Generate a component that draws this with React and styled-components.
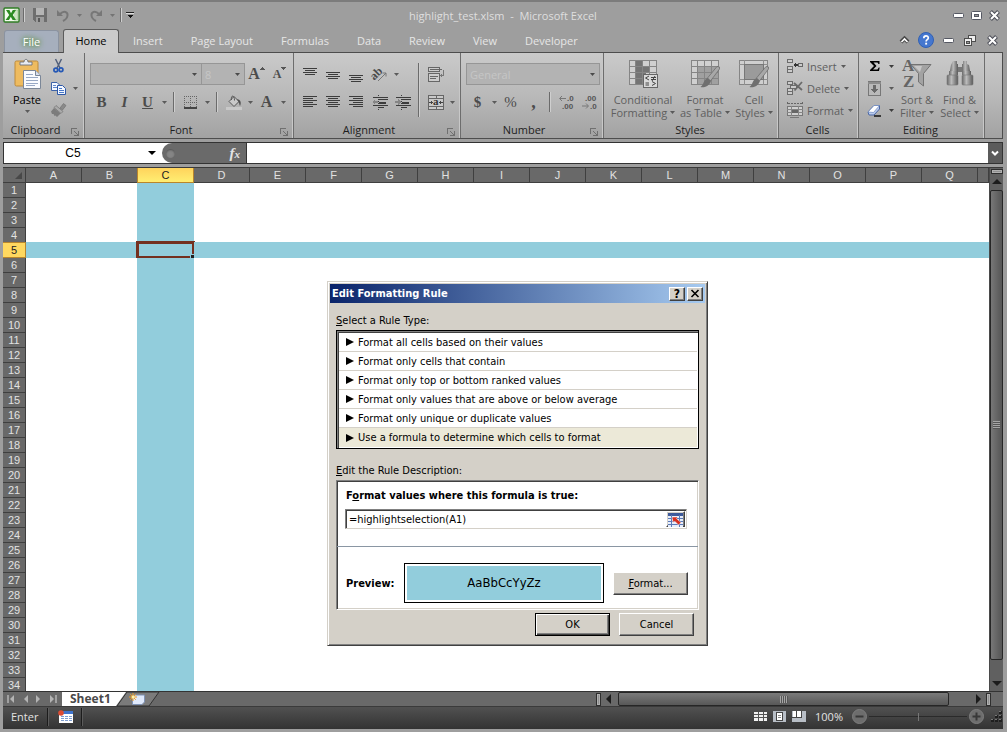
import React from "react";
import styled, { createGlobalStyle, css } from "styled-components";

const GlobalStyle = createGlobalStyle`
  * {
    box-sizing: border-box;
  }

  body {
    margin: 0;
    font-family: "Open Sans", "Noto Sans", sans-serif;
    font-size: 11px;
    color: #1e1e1e;
  }

  button, input, select {
    font: inherit;
    color: inherit;
    margin: 0;
    padding: 0;
    border: 0;
    border-radius: 0;
    background: none;
    appearance: none;
    outline: none;
  }

  svg {
    display: block;
    flex: none;
    overflow: visible;
  }
`;

/* ---------- window frame ---------- */

const Window = styled.div`
  display: flex;
  flex-direction: column;
  height: 100vh;
  padding: 0 4px 3px 3px;
  border-top: 2px solid #7c7c7c;
  background: #9e9e9e;
  overflow: hidden;
`;

const TitleBar = styled.header`
  display: grid;
  grid-template-columns: 1fr auto 1fr;
  align-items: center;
  flex: none;
  height: 28px;
  padding-bottom: 2px;
`;

const QuickAccess = styled.div`
  display: flex;
  align-items: center;
`;

const Title = styled.h1`
  margin: 0;
  font-size: 11px;
  font-weight: 400;
  color: #dedede;
  white-space: pre;
`;

const Controls = styled.div`
  display: flex;
  justify-content: flex-end;
  margin-left: auto;
`;

const ControlButton = styled.button`
  display: flex;
  align-items: center;
  justify-content: center;
  width: ${({ $width }) => $width || 18}px;
  height: 20px;
`;

const TabStrip = styled.nav`
  display: flex;
  align-items: flex-end;
  flex: none;
  height: 22px;
  padding-left: 1px;

  ${Controls} {
    padding-bottom: 2px;
  }
`;

const Tab = styled.button`
  height: 22px;
  padding: 0 14px 2px;
  color: #e6e6e6;

  ${({ $kind }) =>
    $kind === "file" &&
    css`
      width: 55px;
      margin-right: 4px;
      padding: 0 0 1px;
      border: 1px solid #8b93a0;
      border-bottom: 0;
      border-radius: 3px 3px 0 0;
      background: #a6afbd;
      color: #fff;
      text-shadow: 0 0 4px #4f8a2c, 0 0 6px #5f9a3c;
    `}

  ${({ $kind }) =>
    $kind === "active" &&
    css`
      width: 56px;
      height: 24px;
      margin-bottom: -1px;
      padding: 0 0 2px;
      border: 1px solid #5b5b5b;
      border-bottom: 0;
      border-radius: 3px 3px 0 0;
      background: #cbcbcb;
      color: #000;
      z-index: 1;
    `}
`;

/* ---------- ribbon ---------- */

const Ribbon = styled.section`
  display: flex;
  flex: none;
  height: 87px;
  border: 1px solid #4d4d4d;
  border-left: 0;
  background: linear-gradient(#cacaca, #b9b9b9 50%, #a2a2a2);
`;

const Group = styled.div`
  display: flex;
  flex-direction: column;
  width: ${({ $width }) => $width}px;
  border-right: 1px solid #6d6d6d;
  box-shadow: inset -1px 0 #c8c8c8;
`;

const GroupBody = styled.div`
  display: flex;
  flex: 1;
  padding: ${({ $pad }) => $pad || "2px 4px 0"};
`;

const GroupFooter = styled.div`
  display: flex;
  align-items: center;
  height: 17px;
  padding-right: 2px;
`;

const GroupName = styled.span`
  flex: 1;
  text-align: center;
`;

const Launcher = styled.button`
  display: flex;
  align-items: flex-end;
  justify-content: center;
  width: 14px;
  height: 12px;
`;

const Stack = styled.div`
  display: flex;
  flex-direction: column;
  gap: ${({ $gap }) => $gap || 0}px;
`;

const Line = styled.div`
  display: flex;
  align-items: center;
  height: 22px;
`;

const ToolButton = styled.button`
  display: flex;
  align-items: center;
  justify-content: center;
  width: ${({ $width }) => $width || 23}px;
  height: 22px;
  color: #4c4c4c;
`;

const ArrowButton = styled.button`
  display: flex;
  align-items: center;
  justify-content: center;
  width: 10px;
  height: 22px;
`;

const Divider = styled.span`
  align-self: ${({ $tall }) => ($tall ? "stretch" : "center")};
  width: 2px;
  height: ${({ $tall }) => ($tall ? "auto" : "20px")};
  margin: 0 4px;
  border-left: 1px solid #6b6b6b;
  border-right: 1px solid #cfcfcf;
`;

const QuickDivider = styled(Divider)`
  height: 14px;
  margin: 0 3px;
`;

const Glyph = styled.span`
  font-family: "Liberation Serif", serif;
  font-size: ${({ $size }) => $size || 15}px;
  font-weight: ${({ $plain }) => ($plain ? 400 : 700)};
  font-style: ${({ $italic }) => ($italic ? "italic" : "normal")};
  text-decoration: ${({ $underline }) => ($underline ? "underline" : "none")};
  line-height: 18px;
`;

const ComboBox = styled.label`
  display: grid;
  align-items: center;
  width: ${({ $width }) => $width}px;
  height: 22px;
  border: 1px solid #969696;
  background: #b3b3b3;

  & + & {
    border-left: 0;
  }

  select,
  svg {
    grid-area: 1 / 1;
  }

  select {
    width: 100%;
    height: 20px;
    padding-left: 3px;
    color: #c6c6c6;
  }

  svg {
    justify-self: end;
    margin-right: 4px;
    pointer-events: none;
  }
`;

const BigButton = styled.button`
  display: flex;
  flex-direction: column;
  align-items: center;
  justify-content: flex-start;
  width: ${({ $width }) => $width}px;
  padding-top: 4px;
  line-height: 13px;
  color: ${({ $dim }) => ($dim ? "#5f5f5f" : "#000")};
  white-space: nowrap;

  > svg:first-child {
    margin-bottom: 4px;
  }
`;

const Caption = styled.span`
  display: flex;
  align-items: center;
  gap: 3px;

  & + svg {
    margin-top: 4px;
  }
`;

const RowButton = styled.button`
  display: flex;
  align-items: center;
  gap: 4px;
  height: 22px;
  color: #5f5f5f;
`;

/* ---------- formula bar ---------- */

const FormulaBar = styled.div`
  display: flex;
  flex: none;
  height: 22px;
  margin-top: 3px;
  border: 1px solid #333;
  background: #fff;
`;

const NameBox = styled.div`
  display: flex;
  align-items: center;
  width: 158px;

  input {
    width: 138px;
    text-align: center;
    font-family: "Liberation Sans", sans-serif;
    font-size: 12px;
    color: #000;
  }

  button {
    display: flex;
    justify-content: center;
    width: 20px;
  }
`;

const FunctionPad = styled.div`
  display: flex;
  align-items: center;
  justify-content: space-between;
  width: 85px;
  padding: 0 6px 0 4px;
  border-right: 1px solid #333;
  border-radius: 10px 0 0 10px;
  background: #6a6a6a;
`;

const Knob = styled.span`
  width: 9px;
  height: 9px;
  border-radius: 50%;
  background: #858585;
  box-shadow: inset 0 1px 2px #505050;
`;

const FxButton = styled.button`
  font-family: "Liberation Serif", serif;
  font-size: 15px;
  font-style: italic;
  font-weight: 700;
  line-height: 18px;
  color: #e4e4e4;

  small {
    font-size: 11px;
  }
`;

const FormulaInput = styled.input`
  flex: 1;
  min-width: 0;
`;

const ExpandButton = styled.button`
  display: flex;
  align-items: center;
  justify-content: center;
  width: 14px;
  background: #5b5b5b;
`;

/* ---------- worksheet ---------- */

const Worksheet = styled.main`
  display: flex;
  flex: 1;
  min-height: 0;
  margin-top: 3px;
  border-top: 1px solid #3a3a3a;
`;

const GridArea = styled.div`
  flex: 1;
  min-width: 0;
  overflow: hidden;
  background: #fff;
`;

const Grid = styled.table`
  width: 100%;
  table-layout: fixed;
  border-collapse: separate;
  border-spacing: 0;
  font-family: "Liberation Sans", sans-serif;
  font-size: 11px;

  tr {
    height: 15px;
  }

  th,
  td {
    padding: 0;
    line-height: 14px;
  }
`;

const Corner = styled.th`
  width: 23px;
  border-right: 1px solid #3f3f3f;
  border-bottom: 1px solid #3f3f3f;
  background: #696969;

  svg {
    margin: 0 3px 0 auto;
  }
`;

const ColumnHead = styled.th`
  width: ${({ $rest }) => ($rest ? "auto" : "56px")};
  border-right: 1px solid ${({ $on }) => ($on ? "#b9862c" : "#3f3f3f")};
  border-bottom: 1px solid ${({ $on }) => ($on ? "#b9862c" : "#3f3f3f")};
  background: ${({ $on }) => ($on ? "linear-gradient(#ffd35c, #ffee72)" : "#696969")};
  box-shadow: ${({ $on }) => ($on ? "-1px 0 #b9862c" : "none")};
  font-weight: 400;
  color: ${({ $on }) => ($on ? "#222" : "#e2e2e2")};
`;

const RowHead = styled.th`
  border-right: 1px solid ${({ $on }) => ($on ? "#b9862c" : "#3f3f3f")};
  border-bottom: 1px solid ${({ $on }) => ($on ? "#b9862c" : "#3f3f3f")};
  background: ${({ $on }) => ($on ? "#ffd85f" : "#696969")};
  box-shadow: ${({ $on }) => ($on ? "0 -1px #b9862c" : "none")};
  font-weight: 400;
  color: ${({ $on }) => ($on ? "#222" : "#e2e2e2")};
`;

/* the tint also covers the grid line before the cell */
const Cell = styled.td`
  position: relative;
  background: ${({ $inColumn, $inRow }) => ($inColumn || $inRow ? "#92cddc" : "#fff")};
  box-shadow: ${({ $inColumn, $inRow }) =>
    $inRow ? "0 -1px #92cddc" : $inColumn ? "-1px 0 #92cddc" : "none"};
`;

const Selection = styled.div`
  position: absolute;
  inset: -2px -1px -1px -2px;
  border: 3px solid #74301f;

  &::after {
    content: "";
    position: absolute;
    right: -5px;
    bottom: -5px;
    width: 6px;
    height: 6px;
    border-top: 1px solid #92cddc;
    border-left: 1px solid #92cddc;
    background: #222;
  }
`;

const VerticalScroll = styled.div`
  display: flex;
  flex-direction: column;
  align-items: center;
  width: 14px;
  border-left: 1px solid #4a4a4a;
  background: #606060;
`;

const SplitBox = styled.span`
  ${({ $upright }) =>
    $upright
      ? css`
          width: 5px;
          height: 13px;
        `
      : css`
          width: 12px;
          height: 5px;
          margin-top: 1px;
        `}
  border: 1px solid #2f2f2f;
  background: #8f8f8f;
  box-shadow: inset 0 0 0 1px #b0b0b0;
`;

const ScrollArrow = styled.button`
  display: flex;
  align-items: center;
  justify-content: center;
  flex: none;
  width: 15px;
  height: 15px;
`;

const VerticalThumb = styled.div`
  display: flex;
  align-items: center;
  justify-content: center;
  flex: 1;
  width: 13px;
  margin: 1px 0 16px;
  border: 1px solid #262626;
  border-radius: 2px;
  background: linear-gradient(to right, #777, #555);
`;

/* ---------- sheet tabs and status bar ---------- */

const SheetBar = styled.div`
  display: flex;
  align-items: center;
  flex: none;
  height: 16px;
  border-top: 1px solid #333;
  border-bottom: 1px solid #3a3a3a;
  background: #696969;
`;

const SheetNav = styled.div`
  display: flex;
  align-items: center;
  width: 59px;
  padding-left: 1px;
`;

const NavButton = styled.button`
  display: flex;
  align-items: center;
  justify-content: center;
  width: 14px;
  height: 14px;
`;

const SheetTab = styled.button`
  width: 64px;
  height: 14px;
  padding-left: 8px;
  background: #fff;
  clip-path: polygon(0 0, 100% 0, calc(100% - 10px) 100%, 0 100%);
  font-size: 12px;
  font-weight: 700;
  line-height: 14px;
  color: #4a4a4a;
  text-align: left;
`;

const NewSheetTab = styled.button`
  width: 44px;
  height: 14px;
  margin-left: -10px;
`;

const HorizontalScroll = styled.div`
  display: flex;
  align-items: center;
  flex: 0 1 395px;
  height: 14px;
  margin-left: auto;
  margin-right: 12px;
`;

const HorizontalThumb = styled.div`
  display: flex;
  align-items: center;
  justify-content: center;
  flex: 1;
  height: 14px;
  margin: 0 22px 0 2px;
  border: 1px solid #262626;
  border-radius: 2px;
  background: linear-gradient(#7a7a7a, #585858);
`;

const Grip = styled.span`
  width: ${({ $upright }) => ($upright ? 8 : 7)}px;
  height: ${({ $upright }) => ($upright ? 7 : 8)}px;
  background: repeating-linear-gradient(
    ${({ $upright }) => ($upright ? "to right" : "to bottom")},
    #a5a5a5 0 1px,
    #555 1px 2px
  );
`;

const StatusBar = styled.footer`
  display: flex;
  align-items: center;
  flex: none;
  height: 22px;
  padding: 0 0 3px 8px;
  background: linear-gradient(#515151, #333);
  color: #e2e2e2;
`;

const StatusText = styled.span`
  width: 36px;
`;

const StatusDivider = styled.span`
  width: 2px;
  height: 18px;
  border-left: 1px solid #1c1c1c;
  border-right: 1px solid #5b5b5b;
`;

const StatusButton = styled.button`
  display: flex;
  align-items: center;
  justify-content: center;
  width: ${({ $width }) => $width || 19}px;
  height: 19px;
`;

const ViewTools = styled.div`
  display: flex;
  align-items: center;
  gap: ${({ $gap }) => $gap || 0}px;
  margin-left: auto;
`;

const ZoomText = styled.button`
  width: 42px;
`;

const ZoomRange = styled.input`
  width: 98px;
  height: 8px;
  background:
    linear-gradient(#222, #222) center / 1px 8px no-repeat,
    linear-gradient(#2a2a2a, #2a2a2a) center / 100% 1px no-repeat;

  &::-webkit-slider-thumb {
    appearance: none;
    width: 1px;
    height: 8px;
    background: #777;
  }
`;

/* ---------- dialog ---------- */

const Dialog = styled.section`
  position: absolute;
  top: 281px;
  left: 327px;
  width: 381px;
  padding: 1px;
  border: 1px solid;
  border-color: #d4d0c8 #404040 #404040 #d4d0c8;
  background: #d4d0c8;
  box-shadow: inset 1px 1px #fff, inset -1px -1px #808080;
  font-family: "DejaVu Sans Condensed", "DejaVu Sans", sans-serif;
  font-size: 11px;
  color: #000;
`;

const DialogTitle = styled.header`
  display: flex;
  align-items: center;
  gap: 2px;
  height: 19px;
  margin: 1px 1px 0;
  padding: 0 2px;
  background: linear-gradient(to right, #0a246a, #a6caf0);
  color: #fff;

  h2 {
    flex: 1;
    margin: 0;
    font-size: 11px;
  }
`;

const raised = css`
  border: 1px solid;
  border-color: #fff #404040 #404040 #fff;
  background: #d4d0c8;
  box-shadow: inset -1px -1px #808080;
`;

const CaptionButton = styled.button`
  ${raised}
  width: 16px;
  height: 14px;
  display: flex;
  align-items: center;
  justify-content: center;
  font-size: 12px;
  font-weight: 700;
  line-height: 12px;
  color: #000;
`;

const DialogBody = styled.div`
  padding: 11px 7px 8px;
`;

const FieldName = styled.p`
  margin: 0;
  height: 16px;
  line-height: 14px;
`;

const Key = styled.span`
  text-decoration: underline;
`;

const RuleList = styled.ul`
  margin: 0 0 15px;
  padding: 2px 1px 1px 2px;
  border: 1px solid #000;
  background: #fff;
  box-shadow: inset 1px 1px #808080, inset 2px 2px #404040;
  list-style: none;

  li:not(:last-child) button {
    border-bottom: 1px solid #d4d0c8;
  }
`;

const RuleButton = styled.button`
  display: flex;
  align-items: center;
  gap: 4px;
  width: 100%;
  height: 19px;
  padding-left: 6px;
  background: ${({ $chosen }) => ($chosen ? "#ece9d8" : "#fff")};
`;

const RulePanel = styled.div`
  border: 1px solid;
  border-color: #808080 #fff #fff #808080;
  background: #fff;
  box-shadow: inset 1px 1px #404040, inset -1px -1px #d4d0c8;
`;

const FormulaPart = styled.div`
  padding: 8px 11px 17px 8px;
  border-bottom: 1px solid #8a96a3;
`;

const FormulaLabel = styled.label`
  display: block;
  height: 20px;
  padding-left: 1px;
  font-weight: 700;
  line-height: 14px;
`;

const RefEdit = styled.div`
  display: flex;
  height: 20px;
  padding: 1px 1px 1px 3px;
  border: 1px solid;
  border-color: #808080 #d4d0c8 #d4d0c8 #808080;
  box-shadow: inset 1px 1px #404040;

  input {
    flex: 1;
    min-width: 0;
  }

  button {
    ${raised}
    width: 19px;
    padding: 1px;
  }
`;

const PreviewPart = styled.div`
  display: flex;
  align-items: center;
  padding: 16px 10px 6px 9px;
  font-weight: 700;
`;

const PreviewLabel = styled.span`
  width: 58px;
`;

const PreviewBox = styled.div`
  display: flex;
  align-items: center;
  justify-content: center;
  flex: 1;
  height: 40px;
  margin-right: 9px;
  padding: 2px;
  border: 1px solid #000;

  span {
    flex: 1;
    align-self: stretch;
    background: #92cddc;
    font-size: 13px;
    font-weight: 400;
    line-height: 34px;
    text-align: center;
  }
`;

const PushButton = styled.button`
  ${raised}
  width: 75px;
  height: 23px;
  font-weight: 400;

  ${({ $primary }) =>
    $primary &&
    css`
      border-color: #000;
      box-shadow: inset 1px 1px #fff, inset -1px -1px #404040, inset -2px -2px #808080;
    `}
`;

const DialogActions = styled.div`
  display: flex;
  justify-content: flex-end;
  gap: 9px;
  padding: 3px 5px 0;
`;

/* ---------- icons ---------- */

const Icon = ({ w, h, children, sharp = true }) => (
  <svg
    width={w}
    height={h}
    viewBox={`0 0 ${w} ${h}`}
    fill="none"
    shapeRendering={sharp ? "crispEdges" : "auto"}
    aria-hidden="true"
  >
    {children}
  </svg>
);

const Down = ({ color = "#5a5a5a", w = 5 }) => (
  <Icon w={w} h={w > 5 ? 4 : 3} sharp={false}>
    <path d={`M0 0H${w}L${w / 2} ${w > 5 ? 4 : 3}Z`} fill={color} />
  </Icon>
);

const ExcelIcon = () => (
  <Icon w={17} h={16} sharp={false}>
    <rect x="1" y="1" width="15" height="14" rx="1" fill="#f4fbef" stroke="#2f7d25" strokeWidth="1.4" />
    <path d="M11 3H15V13H11" fill="#cfe6c4" stroke="#8cc07c" strokeWidth=".6" />
    <path d="M3 3H6.4L8 6.2 9.8 3H13L9.8 8 13 13H9.6L7.8 9.8 6 13H2.6L6.2 8Z" fill="#2c8c22" />
  </Icon>
);

const SaveIcon = () => (
  <Icon w={14} h={14}>
    <path d="M0 0H14V14H2L0 12Z" fill="#6e6e6e" />
    <rect x="3" y="0" width="8" height="7" fill="#b5b5b5" />
    <rect x="3" y="9" width="8" height="5" fill="#9d9d9d" />
    <rect x="5" y="10" width="2" height="4" fill="#5a5a5a" />
  </Icon>
);

const UndoIcon = ({ flip }) => (
  <Icon w={12} h={13} sharp={false}>
    <g transform={flip ? "matrix(-1 0 0 1 12 0)" : undefined}>
      <path d="M3 5C7 1 11 3 10.5 6.5 10.2 9 8 11 6 12" stroke="#777" strokeWidth="2" />
      <path d="M0 1V7H6Z" fill="#777" />
    </g>
  </Icon>
);

const CustomizeIcon = () => (
  <Icon w={8} h={7}>
    <path d="M0 .5H8" stroke="#222" />
    <path d="M0 1.5H8" stroke="#ddd" />
    <path d="M1 3H7L4 6Z" fill="#111" />
  </Icon>
);

const MinimizeIcon = () => (
  <Icon w={11} h={5} sharp={false}>
    <rect x=".5" y=".5" width="10" height="4" rx="1" fill="#fff" stroke="#555863" />
  </Icon>
);

const MaximizeIcon = () => (
  <Icon w={11} h={9} sharp={false}>
    <rect x=".5" y=".5" width="10" height="8" rx="1" fill="#fff" stroke="#555863" />
    <rect x="3.5" y="3.5" width="4" height="2" fill="#999" stroke="#555863" />
  </Icon>
);

const RestoreIcon = () => (
  <Icon w={12} h={11} sharp={false}>
    <rect x="4.5" y=".5" width="7" height="6" fill="#eee" stroke="#4d4d4d" />
    <rect x=".5" y="3.5" width="7" height="7" fill="#eee" stroke="#4d4d4d" />
    <rect x="2.5" y="6.5" width="3" height="2" fill="#999" stroke="#4d4d4d" />
  </Icon>
);

const CloseIcon = () => (
  <Icon w={11} h={9} sharp={false}>
    <path d="M1.5 .5L9.5 8.5M9.5 .5L1.5 8.5" stroke="#4d4f59" strokeWidth="4" />
    <path d="M2 1L9 8M9 1L2 8" stroke="#fff" strokeWidth="2" />
  </Icon>
);

const CollapseIcon = () => (
  <Icon w={9} h={8} sharp={false}>
    <path d="M1 6L4.5 2.5 8 6" stroke="#484848" strokeWidth="4" />
    <path d="M1.5 6L4.5 3 7.5 6" stroke="#fff" strokeWidth="1.6" />
  </Icon>
);

const HelpIcon = () => (
  <Icon w={16} h={16} sharp={false}>
    <circle cx="8" cy="8" r="7.5" fill="#4577cf" stroke="#3161b4" />
    <path d="M5.8 6.3C5.8 3 10.4 3.3 10.3 6 10.2 7.7 8.1 7.7 8.1 9.5" stroke="#fff" strokeWidth="1.7" />
    <rect x="7.2" y="10.7" width="1.9" height="1.9" fill="#fff" />
  </Icon>
);

const LauncherIcon = () => (
  <Icon w={8} h={8}>
    <path d="M.5 6V.5H6" stroke="#707070" />
    <path d="M3 3L7 7M7.5 3V7.5H3" stroke="#707070" />
  </Icon>
);

const PasteIcon = () => (
  <Icon w={27} h={30} sharp={false}>
    <rect x="1" y="2" width="23" height="25" rx="1.5" fill="#eebb5f" stroke="#bd8a3a" />
    <path d="M6 6V3H10C10 -.5 14 -.5 14 3H18V6Z" fill="#e8ebf0" stroke="#6c7078" strokeWidth=".9" />
    <path d="M9.5 11.5H21.5L26.5 16.5V29.5H9.5Z" fill="#fafcff" stroke="#7b8798" />
    <path d="M21.5 11.5V16.5H26.5" fill="#d7e0ee" stroke="#7b8798" />
    <path d="M12 15.5H19M12 18.5H24M12 21.5H24M12 24.5H24M12 26.5H21" stroke="#98a9c5" />
  </Icon>
);

const CutIcon = () => (
  <Icon w={11} h={14} sharp={false}>
    <path d="M2.5 0L7 9M8.5 0L4 9" stroke="#53617c" strokeWidth="1.5" />
    <circle cx="2.8" cy="11" r="1.9" stroke="#2558b5" strokeWidth="1.7" />
    <circle cx="8" cy="10.7" r="1.9" stroke="#2558b5" strokeWidth="1.7" />
  </Icon>
);

const CopyIcon = () => (
  <Icon w={15} h={13} sharp={false}>
    <path d="M.5 .5H6L8.5 3V8.5H.5Z" fill="#f3f7ff" stroke="#3c62a8" />
    <path d="M2 3.5H5M2 5.5H6" stroke="#5e86cc" />
    <path d="M6.5 3.5H11.5L14.5 6.5V12.5H6.5Z" fill="#f3f7ff" stroke="#2d58a8" />
    <path d="M8 6.5H11M8 8.5H13M8 10.5H13" stroke="#4878c9" />
  </Icon>
);

const BrushIcon = () => (
  <Icon w={15} h={14} sharp={false}>
    <path d="M9 5L12.5 .5 15 2.5 11.5 7Z" fill="#8a8a8a" stroke="#6a6a6a" strokeWidth=".6" />
    <path d="M5 2.5L12 8.5 10 10.5 3 4.5Z" fill="#ababab" stroke="#666" strokeWidth=".6" />
    <path d="M3 5L9.5 10.5 6 14 4.5 12.5 3.5 13 2.5 11 1 11 0 8.5Z" fill="#7c7c7c" />
  </Icon>
);

const BordersIcon = () => (
  <Icon w={13} h={13}>
    <path d="M0 .5H13M0 6.5H13M.5 0V12M6.5 0V12M12.5 0V12" stroke="#666" strokeDasharray="1 1" />
    <path d="M0 12H13" stroke="#444" strokeWidth="2" />
  </Icon>
);

const BucketIcon = () => (
  <Icon w={16} h={15} sharp={false}>
    <rect y="12" width="16" height="3" fill="#c9c9c9" />
    <path d="M3 6.5L8 1.5 13 6.5 8 11.5Z" fill="#c9c9c9" stroke="#555" />
    <path d="M5.5 5C4.5 0 8.5 -.5 8.5 5.5" stroke="#555" />
    <path d="M11 4C15 5 15.500 8 14 11 13 9 13.500 8 12.500 7Z" fill="#4f4f4f" />
  </Icon>
);

/* lines is a list of [x1, x2] pairs, one every other pixel row */
const LinesIcon = ({ lines, top = 0 }) => (
  <Icon w={15} h={15}>
    {lines.map(([from, to], i) => (
      <path key={i} d={`M${from} ${top + i * 2 + 0.5}H${to}`} stroke="#3c3c3c" />
    ))}
  </Icon>
);

const IndentIcon = ({ right }) => (
  <Icon w={16} h={15}>
    <path d="M1 2.5H16M7 4.5H16M1 10.5H16M7 12.5H12" stroke="#3c3c3c" />
    <path d="M7 7.5H14" stroke="#3c3c3c" strokeWidth="2" />
    <path d="M6.500 0V15" stroke="#3c3c3c" strokeDasharray="1 1" />
    <path d={right ? "M0 6H3V4L6 7 3 10V8H0Z" : "M6 6H3V4L0 7 3 10V8H6Z"} fill="#858585" />
  </Icon>
);

const OrientationIcon = () => (
  <Icon w={15} h={15} sharp={false}>
    <text x="-1" y="10" transform="rotate(-45 5 8)" fontFamily="Liberation Serif" fontWeight="700" fontSize="12" fill="#4a4a4a">
      ab
    </text>
    <path d="M6 14L14 6M14 6H10.5M14 6V9.5" stroke="#777" />
  </Icon>
);

const WrapIcon = () => (
  <Icon w={16} h={15}>
    <rect x=".5" y=".5" width="11" height="4" fill="#ccc" stroke="#666" />
    <rect x=".5" y="6.5" width="11" height="8" fill="#ccc" stroke="#666" />
    <path d="M2 2.5H14M2 9.5H10M2 11.5H8" stroke="#666" />
    <path d="M15.5 3V8H12M13.5 6.5V10" stroke="#777" />
  </Icon>
);

const MergeIcon = () => (
  <Icon w={16} h={15}>
    <rect x=".5" y=".5" width="15" height="14" fill="#c9c9c9" stroke="#666" />
    <path d="M0 3.5H16M0 11.5H16M8.5 0V3M8.5 12V15" stroke="#666" />
    <path d="M1 7.5H5M11 7.5H15M3.5 6V9M12.5 6V9" stroke="#444" />
    <text x="5" y="10" fontFamily="Liberation Serif" fontWeight="700" fontSize="11" fill="#333">
      a
    </text>
  </Icon>
);

const DecimalIcon = ({ less }) => (
  <Icon w={16} h={15} sharp={false}>
    <g fontFamily="Liberation Sans" fontWeight="700" fontSize="8" fill="#555">
      <text x={less ? 3 : 8} y="6">
        {less ? ".00" : ".0"}
      </text>
      <text x={less ? 8 : 3} y="14">
        {less ? ".0" : ".00"}
      </text>
    </g>
    <path d={less ? "M0 11H6M4 8.5L6.5 11 4 13.5" : "M7 3.5H1M3 1L.5 3.5 3 6"} stroke="#777" />
  </Icon>
);

const SheetGrid = ({ children, dark }) => (
  <Icon w={30} h={30} sharp={false}>
    <rect x="1" y="1" width="27" height="24" fill="#d0d0d0" />
    {dark}
    <path
      d="M1.5 1V25.5M7.5 1V25M14.5 1V25M21.5 1V25M28.5 1V25M1 1.5H29M1 7.5H29M1 13.5H29M1 19.5H29M1 25.5H29"
      stroke="#858585"
      shapeRendering="crispEdges"
    />
    {children}
  </Icon>
);

const PaintBrush = () => (
  <g>
    <path d="M29.5 8L27 7.5 17.5 19 20.5 22 29.5 10Z" fill="#a8a8a8" stroke="#666" strokeWidth=".7" />
    <path d="M17.5 19L21 22C19 28 13 29 10.5 28 14 26 13 21 17.5 19Z" fill="#6f6f6f" />
  </g>
);

const ConditionalIcon = () => (
  <SheetGrid dark={<path d="M8 1H15V7H21V13H18V19H15V25H8Z" fill="#747474" />}>
    <rect x="15.5" y="15.5" width="14" height="13" fill="#d9d9d9" stroke="#666" />
    <path
      d="M21 17L17.5 19 21 21M23 18.5H28M23 20.5H28M27 17L24 22M17.5 24H21M17.5 26H21M24 22.5L27.5 24.5 24 26.5"
      stroke="#444"
    />
  </SheetGrid>
);

const FormatTableIcon = () => (
  <SheetGrid dark={<path d="M8 8H28V25H8Z" fill="#a0a0a0" />}>
    <PaintBrush />
  </SheetGrid>
);

const CellStylesIcon = () => (
  <Icon w={30} h={30} sharp={false}>
    <rect x=".5" y="1.5" width="28" height="24" fill="#cfcfcf" stroke="#858585" />
    <path d="M0 5.5H29M0 20.5H29M5.5 1V26M24.5 1V26" stroke="#909090" />
    <rect x="5.5" y="5.5" width="19" height="15" fill="#9b9b9b" stroke="#777" />
    <PaintBrush />
  </Icon>
);

const InsertIcon = () => (
  <Icon w={16} h={15}>
    <path d="M.5 .5H5.5V3.5H.5ZM.5 7.5H5.5V13.5H.5ZM.5 10.5H5.5" fill="#ccc" stroke="#6c6c6c" />
    <rect x="11.5" y="4.5" width="4" height="3" fill="#ccc" stroke="#666" />
    <path d="M6 6L9 3V5H11V7H9V9Z" fill="#333" />
  </Icon>
);

const DeleteIcon = () => (
  <Icon w={16} h={15} sharp={false}>
    <path
      d="M.5 .5H5.5V3.5H.5ZM.5 7.5H5.5V13.5H.5ZM.5 10.5H5.5M3.5 4.5H9.5V7.5H3.5Z"
      fill="#ccc"
      stroke="#6c6c6c"
      shapeRendering="crispEdges"
    />
    <path d="M7 2L15 9M15 1L7.5 9.5" stroke="#6a6a6a" strokeWidth="1.8" />
  </Icon>
);

const FormatIcon = () => (
  <Icon w={16} h={16}>
    <path d="M.5 0V3M15.5 0V3M1 1.5H15" stroke="#666" strokeDasharray="2 1" />
    <rect x=".5" y="4.5" width="15" height="9" fill="#cfcfcf" stroke="#777" />
    <path d="M0 7.5H16M0 10.5H16M4.5 4V14M11.5 4V14" stroke="#858585" />
    <rect x="5" y="8" width="6" height="3" fill="#666" />
    <path d="M3 15.5H12" stroke="#777" />
  </Icon>
);

const SigmaIcon = () => (
  <Icon w={10} h={10} sharp={false}>
    <path d="M0 0H9.5V3H8.5L7.5 1.5H3.5L6.5 5 3 8.5H7.5L8.7 6.5H9.7L9 10H0V9L4 5 0 1Z" fill="#000" />
  </Icon>
);

const FillIcon = () => (
  <Icon w={13} h={15}>
    <rect x=".5" y=".5" width="12" height="14" fill="#b9b9b9" stroke="#777" />
    <path d="M0 2H13" stroke="#8c8c8c" strokeWidth="2" />
    <path d="M5 4H8V8H10L6.5 12 3 8H5Z" fill="#696969" />
  </Icon>
);

const EraserIcon = () => (
  <Icon w={15} h={13} sharp={false}>
    <path d="M1 8L7 1.5H12.5V5L7 11H2Z" fill="#b9cbee" stroke="#4a66a4" />
    <path d="M1 8L7 1.5H12.5L6.5 8.5Z" fill="#fff" stroke="#6b86bd" strokeWidth=".7" />
    <path d="M7 12H14" stroke="#111" strokeWidth="1.5" />
  </Icon>
);

const SortIcon = () => (
  <Icon w={30} h={30} sharp={false}>
    <path d="M9 5.5H29L21.5 14.5V27L16.5 23V14.5Z" fill="#a3a3a3" stroke="#737373" />
    <path d="M12 7H20L18 13Z" fill="#c8c8c8" />
    <g fontFamily="Liberation Serif" fontWeight="700" fontSize="17" fill="#656565">
      <text x="0" y="12">
        A
      </text>
      <text x="1" y="28">
        Z
      </text>
    </g>
  </Icon>
);

const FindIcon = () => (
  <Icon w={28} h={30} sharp={false}>
    <defs>
      <linearGradient id="barrel">
        <stop offset="0" stopColor="#686868" />
        <stop offset=".4" stopColor="#bcbcbc" />
        <stop offset="1" stopColor="#5a5a5a" />
      </linearGradient>
    </defs>
    <path d="M7 2H11V5H12V12H4L5 6Z" fill="url(#barrel)" />
    <path d="M17 2H21V5L23 6 24 12H16V5H17Z" fill="url(#barrel)" />
    <rect x="12" y="8" width="4" height="5" fill="#777" />
    <rect x="3" y="12" width="9" height="4" fill="url(#barrel)" />
    <rect x="16" y="12" width="9" height="4" fill="url(#barrel)" />
    <rect x="1" y="16" width="11" height="10" rx="1" fill="url(#barrel)" stroke="#777" strokeWidth=".6" />
    <rect x="16" y="16" width="11" height="10" rx="1" fill="url(#barrel)" stroke="#777" strokeWidth=".6" />
  </Icon>
);

const NavIcon = ({ left, stop }) => (
  <Icon w={8} h={8} sharp={false}>
    <path d={left ? "M7 0V8L3 4Z" : "M1 0V8L5 4Z"} fill="#b4b4b4" />
    {stop && <path d={left ? "M1 0V8" : "M7 0V8"} stroke="#b4b4b4" strokeWidth="1.5" />}
  </Icon>
);

const scrollPaths = {
  up: "M0 7L5 2 10 7Z",
  down: "M0 2L5 7 10 2Z",
  left: "M7 0V10L2 5Z",
  right: "M2 0V10L7 5Z",
};

const ScrollIcon = ({ way }) => (
  <Icon w={10} h={10} sharp={false}>
    <path d={scrollPaths[way]} fill="#1c1c1c" />
  </Icon>
);

const NewSheetIcon = () => (
  <Icon w={44} h={14} sharp={false}>
    <path d="M11 0H43L33 14H1Z" fill="#7b7b7b" stroke="#333" />
    <path d="M16.5 3H28.5V10L26 12.5H16.5Z" fill="#dfe9fb" stroke="#8093b5" />
    <path d="M17 1V9M13 5H21M14.2 2.2L19.8 7.8M19.8 2.2L14.2 7.8" stroke="#f29c1f" />
    <circle cx="17" cy="5" r="1.5" fill="#fff2a8" />
  </Icon>
);

const MacroIcon = () => (
  <Icon w={15} h={13} sharp={false}>
    <rect x="1" y="1" width="14" height="12" fill="#fff" />
    <rect x="1" y="1" width="14" height="3" fill="#3f74ce" />
    <path d="M3 6.5H14M3 8.5H14M3 10.5H14" stroke="#7f9ed0" />
    <path d="M6.5 5V12M10.5 5V12" stroke="#fff" />
    <circle cx="3" cy="3" r="2.8" fill="#dd4b32" />
  </Icon>
);

const NormalViewIcon = () => (
  <Icon w={13} h={9}>
    <rect width="13" height="9" fill="#f2f2f2" />
    <path d="M0 2.5H13M0 5.5H13M4 0V9M9 0V9" stroke="#555" />
  </Icon>
);

const LayoutViewIcon = () => (
  <Icon w={13} h={11}>
    <rect width="13" height="11" fill="#b8bec6" />
    <rect x="3.5" y="1.5" width="6" height="8" fill="#fff" stroke="#444" />
    <path d="M5 4.5H8M5 6.5H8" stroke="#888" />
  </Icon>
);

const BreakViewIcon = () => (
  <Icon w={14} h={11}>
    <rect width="14" height="11" fill="#b8bec6" />
    <path d="M1 0H4V6H1ZM5 0H9V6H5Z" fill="#fff" />
    <path d="M4.5 0V6M0 6.5H9.5V0" stroke="#444" />
  </Icon>
);

const ZoomIcon = ({ plus }) => (
  <Icon w={15} h={15} sharp={false}>
    <circle cx="7.5" cy="7.5" r="7" fill="#6d6d6d" stroke="#7e7e7e" />
    <path d={plus ? "M3.5 7.5H11.5M7.5 3.5V11.5" : "M3.5 7.5H11.5"} stroke="#383838" strokeWidth="2" />
  </Icon>
);

const ResizeIcon = () => (
  <Icon w={12} h={12}>
    <path d="M8 0H11V3H8ZM8 4H11V7H8ZM4 4H7V7H4ZM8 8H11V11H8ZM4 8H7V11H4ZM0 8H3V11H0Z" fill="#1f1f1f" />
    <path d="M8 0H10V1H8ZM8 4H10V5H8ZM4 4H6V5H4ZM8 8H10V9H8ZM4 8H6V9H4ZM0 8H2V9H0Z" fill="#777" />
  </Icon>
);

const RefEditIcon = () => (
  <Icon w={15} h={14} sharp={false}>
    <rect width="15" height="14" fill="#e7eefb" />
    <rect width="15" height="3" fill="#3e5a9b" />
    <path d="M0 5.5H15M0 8.5H15M0 11.5H15M3.5 2V14M11.5 2V14" stroke="#5b7ab8" />
    <path d="M4 4H10L8.500 5.500 13 9.500 10.500 12 6.500 8 5 9.500Z" fill="#d83020" stroke="#fff" strokeWidth=".5" />
  </Icon>
);

/* ---------- page ---------- */

const TABS = ["Insert", "Page Layout", "Formulas", "Data", "Review", "View", "Developer"];

const COLUMNS = "ABCDEFGHIJKLMNOPQ".split("");
const ROWS = Array.from({ length: 34 }, (_, i) => i + 1);
const ACTIVE = { column: "C", row: 5 };

const RULES = [
  "Format all cells based on their values",
  "Format only cells that contain",
  "Format only top or bottom ranked values",
  "Format only values that are above or below average",
  "Format only unique or duplicate values",
  "Use a formula to determine which cells to format",
];

const FULL = [0, 14];
const SHORT = [0, 10];

const Arrow = ({ label, color }) => (
  <ArrowButton aria-label={label}>
    <Down color={color} />
  </ArrowButton>
);

const Combo = ({ width, label, value }) => (
  <ComboBox $width={width}>
    <select aria-label={label} defaultValue={value}>
      <option value={value}>{value}</option>
    </select>
    <Down color="#4a4a4a" />
  </ComboBox>
);

const RibbonGroup = ({ name, width, pad, launcher, children }) => (
  <Group $width={width}>
    <GroupBody $pad={pad}>{children}</GroupBody>
    <GroupFooter>
      <GroupName>{name}</GroupName>
      {launcher && (
        <Launcher aria-label={`${name} options`}>
          <LauncherIcon />
        </Launcher>
      )}
    </GroupFooter>
  </Group>
);

const Big = ({ width, icon, first, second }) => (
  <BigButton $width={width} $dim>
    {icon}
    <Caption>{first}</Caption>
    <Caption>
      {second}
      <Down />
    </Caption>
  </BigButton>
);

const HomeRibbon = () => (
  <Ribbon>
    <RibbonGroup name="Clipboard" width={82} launcher pad="2px 4px 0">
      <BigButton $width={41}>
        <PasteIcon />
        <Caption>Paste</Caption>
        <Down />
      </BigButton>
      <Stack>
        <Line>
          <ToolButton aria-label="Cut">
            <CutIcon />
          </ToolButton>
        </Line>
        <Line>
          <ToolButton aria-label="Copy">
            <CopyIcon />
          </ToolButton>
          <Arrow label="Copy options" />
        </Line>
        <Line>
          <ToolButton aria-label="Format Painter">
            <BrushIcon />
          </ToolButton>
        </Line>
      </Stack>
    </RibbonGroup>

    <RibbonGroup name="Font" width={209} launcher pad="10px 1px 0 5px">
      <Stack $gap={6}>
        <Line>
          <Combo width={112} label="Font" value="" />
          <Combo width={43} label="Font size" value="8" />
          <ToolButton aria-label="Grow font">
            <Glyph $size={16}>A</Glyph>
            <Icon w={5} h={14}>
              <path d="M0 3L2.5 0 5 3Z" fill="#555" />
            </Icon>
          </ToolButton>
          <ToolButton aria-label="Shrink font">
            <Glyph $size={12}>A</Glyph>
            <Icon w={5} h={14}>
              <path d="M0 0L2.5 3 5 0Z" fill="#555" />
            </Icon>
          </ToolButton>
        </Line>
        <Line>
          <ToolButton aria-label="Bold">
            <Glyph>B</Glyph>
          </ToolButton>
          <ToolButton aria-label="Italic">
            <Glyph $italic>I</Glyph>
          </ToolButton>
          <ToolButton aria-label="Underline">
            <Glyph $underline>U</Glyph>
          </ToolButton>
          <Arrow label="Underline options" />
          <Divider />
          <ToolButton aria-label="Borders">
            <BordersIcon />
          </ToolButton>
          <Arrow label="Border options" />
          <Divider />
          <ToolButton aria-label="Fill color">
            <BucketIcon />
          </ToolButton>
          <Arrow label="Fill options" />
          <ToolButton aria-label="Font color">
            <Glyph $size={16}>A</Glyph>
          </ToolButton>
          <Arrow label="Font color options" />
        </Line>
      </Stack>
    </RibbonGroup>

    <RibbonGroup name="Alignment" width={167} launcher pad="10px 1px 4px 5px">
      <Stack $gap={6}>
        <Line>
          <ToolButton aria-label="Top align">
            <LinesIcon top={1} lines={[FULL, [2, 12], FULL, [2, 12]]} />
          </ToolButton>
          <ToolButton aria-label="Middle align">
            <LinesIcon top={5} lines={[FULL, [2, 12], FULL, [2, 12]]} />
          </ToolButton>
          <ToolButton aria-label="Bottom align">
            <LinesIcon top={8} lines={[FULL, [2, 12], FULL, [2, 12]]} />
          </ToolButton>
          <ToolButton aria-label="Orientation">
            <OrientationIcon />
          </ToolButton>
          <Arrow label="Orientation options" />
        </Line>
        <Line>
          <ToolButton aria-label="Align left">
            <LinesIcon top={1} lines={[FULL, SHORT, FULL, SHORT, FULL, SHORT]} />
          </ToolButton>
          <ToolButton aria-label="Center">
            <LinesIcon top={1} lines={[FULL, [2, 12], FULL, [2, 12], FULL, [2, 12]]} />
          </ToolButton>
          <ToolButton aria-label="Align right">
            <LinesIcon top={1} lines={[FULL, [4, 14], FULL, [4, 14], FULL, [4, 14]]} />
          </ToolButton>
          <ToolButton aria-label="Decrease indent">
            <IndentIcon />
          </ToolButton>
          <ToolButton aria-label="Increase indent">
            <IndentIcon right />
          </ToolButton>
        </Line>
      </Stack>
      <Divider $tall />
      <Stack $gap={6}>
        <ToolButton aria-label="Wrap text">
          <WrapIcon />
        </ToolButton>
        <Line>
          <ToolButton aria-label="Merge">
            <MergeIcon />
          </ToolButton>
          <Arrow label="Merge options" />
        </Line>
      </Stack>
    </RibbonGroup>

    <RibbonGroup name="Number" width={143} launcher pad="10px 1px 0 5px">
      <Stack $gap={6}>
        <Combo width={134} label="Number format" value="General" />
        <Line>
          <ToolButton aria-label="Currency">
            <Glyph>$</Glyph>
          </ToolButton>
          <Arrow label="Currency options" />
          <ToolButton aria-label="Percent">
            <Glyph $plain>%</Glyph>
          </ToolButton>
          <ToolButton aria-label="Comma style">
            <Glyph $size={18}>,</Glyph>
          </ToolButton>
          <Divider />
          <ToolButton aria-label="Increase decimal">
            <DecimalIcon />
          </ToolButton>
          <ToolButton aria-label="Decrease decimal">
            <DecimalIcon less />
          </ToolButton>
        </Line>
      </Stack>
    </RibbonGroup>

    <RibbonGroup name="Styles" width={175} pad="2px 1px 0 3px">
      <Big width={72} icon={<ConditionalIcon />} first="Conditional" second="Formatting" />
      <Big width={52} icon={<FormatTableIcon />} first="Format" second="as Table" />
      <Big width={46} icon={<CellStylesIcon />} first="Cell" second="Styles" />
    </RibbonGroup>

    <RibbonGroup name="Cells" width={80} pad="2px 1px 0 8px">
      <Stack>
        <RowButton>
          <InsertIcon />
          Insert
          <Down />
        </RowButton>
        <RowButton>
          <DeleteIcon />
          Delete
          <Down />
        </RowButton>
        <RowButton>
          <FormatIcon />
          Format
          <Down />
        </RowButton>
      </Stack>
    </RibbonGroup>

    <RibbonGroup name="Editing" width={126} pad="2px 1px 0 4px">
      <Stack>
        <Line>
          <ToolButton aria-label="Sum">
            <SigmaIcon />
          </ToolButton>
          <Arrow label="Sum options" color="#3c3c3c" />
        </Line>
        <Line>
          <ToolButton aria-label="Fill">
            <FillIcon />
          </ToolButton>
          <Arrow label="Fill direction" />
        </Line>
        <Line>
          <ToolButton aria-label="Clear">
            <EraserIcon />
          </ToolButton>
          <Arrow label="Clear options" color="#3c3c3c" />
        </Line>
      </Stack>
      <Big width={42} icon={<SortIcon />} first="Sort &amp;" second="Filter" />
      <Big width={43} icon={<FindIcon />} first="Find &amp;" second="Select" />
    </RibbonGroup>
  </Ribbon>
);

const SheetTable = () => (
  <Grid>
    <thead>
      <tr>
        <Corner aria-label="Select all">
          <Icon w={7} h={7} sharp={false}>
            <path d="M7 0V7H0Z" fill="#484848" />
          </Icon>
        </Corner>
        {COLUMNS.map((name) => (
          <ColumnHead key={name} scope="col" $on={name === ACTIVE.column}>
            {name}
          </ColumnHead>
        ))}
        <ColumnHead $rest />
      </tr>
    </thead>
    <tbody>
      {ROWS.map((row) => (
        <tr key={row}>
          <RowHead scope="row" $on={row === ACTIVE.row}>
            {row}
          </RowHead>
          {COLUMNS.map((name) => (
            <Cell key={name} $inColumn={name === ACTIVE.column} $inRow={row === ACTIVE.row}>
              {name === ACTIVE.column && row === ACTIVE.row && <Selection />}
            </Cell>
          ))}
          <Cell $inRow={row === ACTIVE.row} />
        </tr>
      ))}
    </tbody>
  </Grid>
);

const RuleDialog = () => {
  const [rule, setRule] = React.useState(5);
  const [formula, setFormula] = React.useState("=highlightselection(A1)");

  return (
    <Dialog role="dialog" aria-label="Edit Formatting Rule">
      <DialogTitle>
        <h2>Edit Formatting Rule</h2>
        <CaptionButton aria-label="Help">?</CaptionButton>
        <CaptionButton aria-label="Close">
          <Icon w={8} h={7} sharp={false}>
            <path d="M.5 0L7.5 7M7.5 0L.5 7" stroke="#000" strokeWidth="1.6" />
          </Icon>
        </CaptionButton>
      </DialogTitle>
      <DialogBody>
        <FieldName>
          <Key>S</Key>elect a Rule Type:
        </FieldName>
        <RuleList>
          {RULES.map((text, i) => (
            <li key={text}>
              <RuleButton $chosen={i === rule} aria-pressed={i === rule} onClick={() => setRule(i)}>
                <Icon w={9} h={8} sharp={false}>
                  <path d="M1 0L9 4 1 8Z" fill="#000" />
                </Icon>
                {text}
              </RuleButton>
            </li>
          ))}
        </RuleList>
        <FieldName>
          <Key>E</Key>dit the Rule Description:
        </FieldName>
        <RulePanel>
          <FormulaPart>
            <FormulaLabel htmlFor="formula">
              F<Key>o</Key>rmat values where this formula is true:
            </FormulaLabel>
            <RefEdit>
              <input id="formula" value={formula} onChange={(e) => setFormula(e.target.value)} />
              <button aria-label="Pick range">
                <RefEditIcon />
              </button>
            </RefEdit>
          </FormulaPart>
          <PreviewPart>
            <PreviewLabel>Preview:</PreviewLabel>
            <PreviewBox>
              <span>AaBbCcYyZz</span>
            </PreviewBox>
            <PushButton>
              <Key>F</Key>ormat...
            </PushButton>
          </PreviewPart>
        </RulePanel>
        <DialogActions>
          <PushButton $primary>OK</PushButton>
          <PushButton>Cancel</PushButton>
        </DialogActions>
      </DialogBody>
    </Dialog>
  );
};

const App = () => {
  const [cellName, setCellName] = React.useState("C5");

  return (
    <>
      <GlobalStyle />
      <Window>
        <TitleBar>
          <QuickAccess>
            <ExcelIcon />
            <QuickDivider />
            <ToolButton aria-label="Save">
              <SaveIcon />
            </ToolButton>
            <ToolButton aria-label="Undo">
              <UndoIcon />
            </ToolButton>
            <Arrow label="Undo history" color="#747474" />
            <ToolButton aria-label="Redo">
              <UndoIcon flip />
            </ToolButton>
            <Arrow label="Redo history" color="#747474" />
            <QuickDivider />
            <ControlButton $width={10} aria-label="Customize toolbar">
              <CustomizeIcon />
            </ControlButton>
          </QuickAccess>
          <Title>highlight_test.xlsm  -  Microsoft Excel</Title>
          <Controls>
            <ControlButton aria-label="Minimize">
              <MinimizeIcon />
            </ControlButton>
            <ControlButton aria-label="Maximize">
              <MaximizeIcon />
            </ControlButton>
            <ControlButton aria-label="Close">
              <CloseIcon />
            </ControlButton>
          </Controls>
        </TitleBar>

        <TabStrip>
          <Tab $kind="file">File</Tab>
          <Tab $kind="active">Home</Tab>
          {TABS.map((tab) => (
            <Tab key={tab}>{tab}</Tab>
          ))}
          <Controls>
            <ControlButton $width={22} aria-label="Collapse ribbon">
              <CollapseIcon />
            </ControlButton>
            <ControlButton $width={22} aria-label="Help">
              <HelpIcon />
            </ControlButton>
            <ControlButton $width={22} aria-label="Minimize workbook">
              <MinimizeIcon />
            </ControlButton>
            <ControlButton $width={22} aria-label="Restore workbook">
              <RestoreIcon />
            </ControlButton>
            <ControlButton $width={22} aria-label="Close workbook">
              <CloseIcon />
            </ControlButton>
          </Controls>
        </TabStrip>

        <HomeRibbon />

        <FormulaBar>
          <NameBox>
            <input aria-label="Name box" value={cellName} onChange={(e) => setCellName(e.target.value)} />
            <button aria-label="Names">
              <Down color="#000" w={8} />
            </button>
          </NameBox>
          <FunctionPad>
            <Knob />
            <FxButton aria-label="Insert function">
              f<small>x</small>
            </FxButton>
          </FunctionPad>
          <FormulaInput aria-label="Formula" />
          <ExpandButton aria-label="Expand formula bar">
            <Icon w={8} h={7} sharp={false}>
              <path d="M1 1.5L4 4.5 7 1.5" stroke="#fff" strokeWidth="2" />
            </Icon>
          </ExpandButton>
        </FormulaBar>

        <Worksheet>
          <GridArea>
            <SheetTable />
          </GridArea>
          <VerticalScroll>
            <SplitBox />
            <ScrollArrow aria-label="Scroll up">
              <ScrollIcon way="up" />
            </ScrollArrow>
            <VerticalThumb>
              <Grip />
            </VerticalThumb>
            <ScrollArrow aria-label="Scroll down">
              <ScrollIcon way="down" />
            </ScrollArrow>
          </VerticalScroll>
        </Worksheet>

        <SheetBar>
          <SheetNav>
            <NavButton aria-label="First sheet">
              <NavIcon left stop />
            </NavButton>
            <NavButton aria-label="Previous sheet">
              <NavIcon left />
            </NavButton>
            <NavButton aria-label="Next sheet">
              <NavIcon />
            </NavButton>
            <NavButton aria-label="Last sheet">
              <NavIcon stop />
            </NavButton>
          </SheetNav>
          <SheetTab>Sheet1</SheetTab>
          <NewSheetTab aria-label="New sheet">
            <NewSheetIcon />
          </NewSheetTab>
          <HorizontalScroll>
            <SplitBox $upright />
            <ScrollArrow aria-label="Scroll left">
              <ScrollIcon way="left" />
            </ScrollArrow>
            <HorizontalThumb>
              <Grip $upright />
            </HorizontalThumb>
            <ScrollArrow aria-label="Scroll right">
              <ScrollIcon way="right" />
            </ScrollArrow>
            <SplitBox $upright />
          </HorizontalScroll>
        </SheetBar>

        <StatusBar>
          <StatusText>Enter</StatusText>
          <StatusDivider />
          <StatusButton $width={32} aria-label="Record macro">
            <MacroIcon />
          </StatusButton>
          <StatusDivider />
          <ViewTools $gap={5}>
            <ViewTools>
              <StatusButton aria-label="Normal view">
                <NormalViewIcon />
              </StatusButton>
              <StatusButton aria-label="Page layout view">
                <LayoutViewIcon />
              </StatusButton>
              <StatusButton aria-label="Page break view">
                <BreakViewIcon />
              </StatusButton>
              <ZoomText>100%</ZoomText>
              <StatusButton aria-label="Zoom out">
                <ZoomIcon />
              </StatusButton>
              <ZoomRange type="range" aria-label="Zoom" defaultValue={50} />
              <StatusButton aria-label="Zoom in">
                <ZoomIcon plus />
              </StatusButton>
            </ViewTools>
            <ResizeIcon />
          </ViewTools>
        </StatusBar>
      </Window>
      <RuleDialog />
    </>
  );
};

export default App;
